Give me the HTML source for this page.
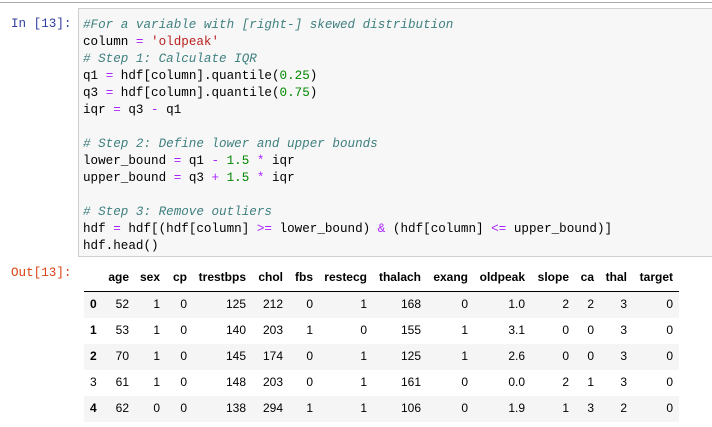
<!DOCTYPE html>
<html><head><style>
body{margin:0;width:712px;height:427px;background:#fff;position:relative;overflow:hidden}
.topline{position:absolute;left:0;top:2px;width:712px;height:1px;background:#aaa}
.prompt{position:absolute;font-family:"Liberation Mono",monospace;font-size:12.6px;}
.box{position:absolute;left:78px;top:8px;width:640px;height:249px;background:#f7f7f7;border:1px solid #cfcfcf;box-sizing:border-box}
pre{position:absolute;left:83px;top:17px;margin:0;font-family:"Liberation Mono",monospace;font-size:12.6px;line-height:17px;color:#000}
.c{color:#408080;font-style:italic}.o{color:#aa22ff}.s{color:#ba2121}.n{color:#080}
.row{position:absolute;left:84px;width:595px;height:26px}
.t{position:absolute;font-family:"Liberation Sans",Arial,sans-serif;font-size:12px;color:#000;text-align:right;width:80px}
.h{font-weight:bold}
</style></head><body>
<div class="topline"></div>
<div class="prompt" style="left:11px;top:17px;color:#303f9f">In [13]:</div>
<div class="box"></div>
<pre><span class="c">#For a variable with [right-] skewed distribution</span>
column <span class="o">=</span> <span class="s">'oldpeak'</span>
<span class="c"># Step 1: Calculate IQR</span>
q1 <span class="o">=</span> hdf[column].quantile(<span class="n">0.25</span>)
q3 <span class="o">=</span> hdf[column].quantile(<span class="n">0.75</span>)
iqr <span class="o">=</span> q3 <span class="o">-</span> q1

<span class="c"># Step 2: Define lower and upper bounds</span>
lower_bound <span class="o">=</span> q1 <span class="o">-</span> <span class="n">1.5</span> <span class="o">*</span> iqr
upper_bound <span class="o">=</span> q3 <span class="o">+</span> <span class="n">1.5</span> <span class="o">*</span> iqr

<span class="c"># Step 3: Remove outliers</span>
hdf <span class="o">=</span> hdf[(hdf[column] <span class="o">&gt;=</span> lower_bound) <span class="o">&amp;</span> (hdf[column] <span class="o">&lt;=</span> upper_bound)]
hdf.head()</pre>
<div class="prompt" style="left:11px;top:266px;color:#d84315">Out[13]:</div>
<div class="row" style="top:292px;background:#f5f5f5"></div>
<div class="row" style="top:344px;background:#f5f5f5"></div>
<div class="row" style="top:396px;background:#f5f5f5"></div>
<div style="position:absolute;left:84px;top:291px;width:595px;height:1px;background:#000"></div>
<div id="tbl"></div>
<script>
var R=[129,160,187,246,283,313,367,421,468,525,569,594,627,673];
var H=["age","sex","cp","trestbps","chol","fbs","restecg","thalach","exang","oldpeak","slope","ca","thal","target"];
var D=[[52,1,0,125,212,0,1,168,0,"1.0",2,2,3,0],[53,1,0,140,203,1,0,155,1,"3.1",0,0,3,0],[70,1,0,145,174,0,1,125,1,"2.6",0,0,3,0],[61,1,0,148,203,0,1,161,0,"0.0",2,1,3,0],[62,0,0,138,294,1,1,106,0,"1.9",1,3,2,0]];
var h="";
for(var i=0;i<14;i++)h+='<div class="t h" style="left:'+(R[i]-80)+'px;top:270px">'+H[i]+'</div>';
for(var r=0;r<5;r++){var y=297+r*26;
h+='<div class="t'+(r==3?'':' h')+'" style="text-align:left;left:90px;top:'+y+'px">'+r+'</div>';
for(var i=0;i<14;i++)h+='<div class="t" style="left:'+(R[i]-80)+'px;top:'+y+'px">'+D[r][i]+'</div>';}
document.getElementById("tbl").innerHTML=h;
</script>
</body></html>
